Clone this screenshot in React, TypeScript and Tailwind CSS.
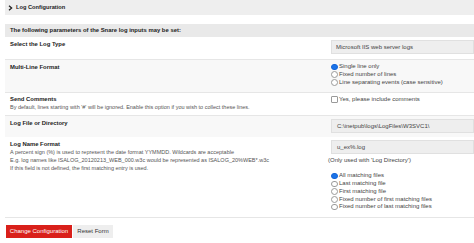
import React from "react";

function Radio({ checked, label }: { checked?: boolean; label: string }) {
  return (
    <div className="flex items-center h-[7.75px] gap-[1.5px]">
      {checked ? (
        <span className="w-[6.5px] h-[6.5px] rounded-full bg-[#1a73e8] border border-[#1565d8] shrink-0" />
      ) : (
        <span className="w-[6.5px] h-[6.5px] rounded-full bg-white border border-[#9a9a9a] shrink-0" />
      )}
      <span className="leading-[7.75px]">{label}</span>
    </div>
  );
}

export default function App() {
  return (
    <div
      className="w-[474px] h-[243px] overflow-hidden bg-white text-[#333]"
      style={{ fontFamily: '"Liberation Sans", Arial, sans-serif' }}
    >
      <div className="pl-[5px]">
        {/* Header */}
        <div className="h-[15px] bg-[#eeeeee] flex items-center pl-[3px]">
          <svg width="5" height="6" viewBox="0 0 5 6" className="mr-[3px]">
            <path d="M1 0.8 L3.6 3 L1 5.2" fill="none" stroke="#222" strokeWidth="1.3" />
          </svg>
          <span className="text-[5.7px] font-bold text-[#222]">Log Configuration</span>
        </div>

        {/* Params band */}
        <div className="mt-[9px] h-[13px] bg-[#e9e9e9] flex items-center pl-[5px]">
          <span className="text-[5.9px] font-bold text-[#222]">
            The following parameters of the Snare log inputs may be set:
          </span>
        </div>

        {/* Row: Select log type */}
        <div className="flex border-b border-[#e6e6e6] pt-[3px] pb-[5px]">
          <div className="w-[326px] pl-[5px] text-[5.9px] font-bold leading-[8px] text-[#222]">
            Select the Log Type
          </div>
          <div className="flex-1">
            <div className="h-[14px] bg-[#eeeeee] border border-[#e0e0e0] flex items-center pl-[4px] text-[6px] text-[#444]">
              Microsoft IIS web server logs
            </div>
          </div>
        </div>

        {/* Row: Multi-line */}
        <div className="flex bg-[#f8f8f8] border-b border-[#e6e6e6] pt-[3px] pb-[6px]">
          <div className="w-[326px] pl-[5px] text-[5.9px] font-bold leading-[8px] text-[#222]">
            Multi-Line Format
          </div>
          <div className="flex-1 text-[6px] text-[#444]">
            <Radio checked label="Single line only" />
            <Radio label="Fixed number of lines" />
            <Radio label="Line separating events (case sensitive)" />
          </div>
        </div>

        {/* Row: Send comments */}
        <div className="flex border-b border-[#e6e6e6] pt-[2px] pb-[4px]">
          <div className="w-[326px] pl-[5px] leading-[8px] whitespace-nowrap">
            <div className="text-[5.9px] font-bold text-[#222]">Send Comments</div>
            <div className="text-[5.5px] text-[#555]">
              By default, lines starting with '#' will be ignored. Enable this option if you wish to collect these lines.
            </div>
          </div>
          <div className="flex-1 text-[6px] text-[#444]">
            <div className="flex items-center h-[8px] gap-[1.5px]">
              <span className="w-[6.5px] h-[6.5px] rounded-[1px] bg-white border border-[#9a9a9a] shrink-0" />
              <span>Yes, please include comments</span>
            </div>
          </div>
        </div>

        {/* Row: Log file or directory */}
        <div className="flex bg-[#f8f8f8] pt-[3px] pb-[4px]">
          <div className="w-[326px] pl-[5px] text-[5.9px] font-bold leading-[8px] text-[#222]">
            Log File or Directory
          </div>
          <div className="flex-1">
            <div className="h-[14px] bg-[#eeeeee] border border-[#e0e0e0] flex items-center pl-[5px] text-[6px] text-[#444]">
              C:\inetpub\logs\LogFiles\W3SVC1\
            </div>
          </div>
        </div>

        {/* Row: Log name format */}
        <div className="flex border-b border-[#e6e6e6] pt-[3px] pb-[6px]">
          <div className="w-[326px] pl-[5px] leading-[8px] whitespace-nowrap">
            <div className="text-[5.9px] font-bold text-[#222]">Log Name Format</div>
            <div className="text-[5.5px] text-[#555]">
              <div>A percent sign (%) is used to represent the date format YYMMDD. Wildcards are acceptable</div>
              <div>E.g. log names like ISALOG_20120213_WEB_000.w3c would be represented as ISALOG_20%WEB*.w3c</div>
              <div>If this field is not defined, the first matching entry is used.</div>
            </div>
          </div>
          <div className="flex-1 text-[6px] text-[#444]">
            <div className="h-[14px] bg-[#eeeeee] border border-[#e0e0e0] flex items-center pl-[5px]">
              u_ex%.log
            </div>
            <div className="mt-[2px] leading-[8px] -ml-[3px]">(Only used with 'Log Directory')</div>
            <div className="mt-[8px]">
              <Radio checked label="All matching files" />
              <Radio label="Last matching file" />
              <Radio label="First matching file" />
              <Radio label="Fixed number of first matching files" />
              <Radio label="Fixed number of last matching files" />
            </div>
          </div>
        </div>

        {/* Buttons */}
        <div className="mt-[7px] flex pl-[1px]">
          <button className="h-[13px] w-[66px] bg-[#d9201a] text-white text-[6px] flex items-center justify-center">
            Change Configuration
          </button>
          <button className="h-[13px] w-[40px] ml-[1px] bg-[#eeeeee] text-[#333] text-[6px] flex items-center justify-center">
            Reset Form
          </button>
        </div>
      </div>
    </div>
  );
}
